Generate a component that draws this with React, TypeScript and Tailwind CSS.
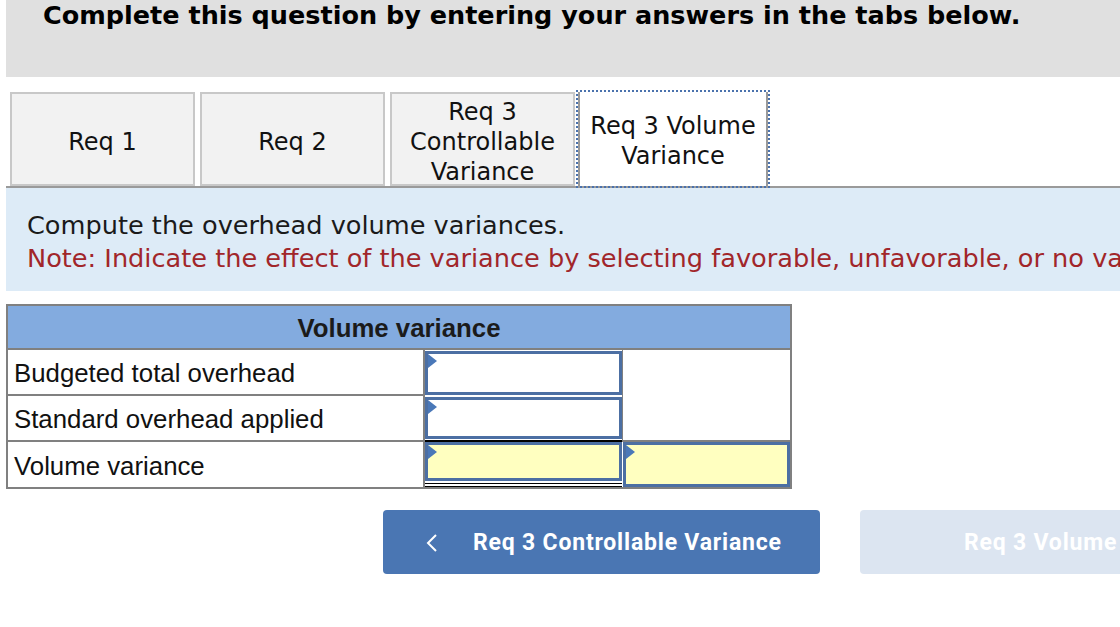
import React from "react";

const verdana = { fontFamily: '"DejaVu Sans", Verdana, sans-serif' };

function Tab({ children }: { children: React.ReactNode }) {
  return (
    <div className="w-[185px] h-[94px] border-2 border-[#c8c8c8] bg-[#f2f2f2] flex items-center justify-center pt-[5px] text-center text-[24px] leading-[30px] text-[#111]">
      {children}
    </div>
  );
}

function Arrow() {
  return (
    <svg className="absolute left-0 top-0" width="10" height="14" viewBox="0 0 10 14">
      <polygon points="0,0 9,7 0,14" fill="#4a78b8" />
    </svg>
  );
}

function InputBox({ yellow }: { yellow?: boolean }) {
  return (
    <div
      className={
        "relative h-full border-[3px] border-[#4c6fa3] " +
        (yellow ? "bg-[#ffffc0]" : "bg-white")
      }
    >
      <Arrow />
    </div>
  );
}

export default function App() {
  return (
    <div className="w-[1120px] h-[627px] bg-white overflow-hidden" style={verdana}>
      <div className="ml-[6px] h-[77px] bg-[#e0e0e0] pl-[37px]">
        <div className="text-[25.5px] font-bold text-black leading-[30px] whitespace-nowrap">
          Complete this question by entering your answers in the tabs below.
        </div>
      </div>

      <div className="mt-[15px] ml-[6px] flex items-end border-b-2 border-[#9a9a9a] h-[96px]">
        <div className="flex gap-[5px] pl-[4px] items-end">
          <Tab>Req 1</Tab>
          <Tab>Req 2</Tab>
          <Tab>
            Req 3
            <br />
            Controllable
            <br />
            Variance
          </Tab>
        </div>
        <div className="ml-px -mb-[2px] h-[98px] w-[194px] border-2 border-dotted border-[#4a72ad]">
          <div className="h-full border-x-2 border-[#9a9a9a] bg-white flex items-center justify-center pt-[3px] text-center text-[24px] leading-[30px] text-[#111]">
            <span>
              Req 3 Volume
              <br />
              Variance
            </span>
          </div>
        </div>
      </div>

      <div className="ml-[6px] h-[103px] bg-[#ddebf7] pl-[21px] pt-[21px] text-[25.6px] leading-[33px] whitespace-nowrap">
        <div className="text-[#1a1a1a]">Compute the overhead volume variances.</div>
        <div className="text-[#a1262a]">
          Note: Indicate the effect of the variance by selecting favorable, unfavorable, or no variance.
        </div>
      </div>

      <div
        className="ml-[6px] mt-[13px] w-[786px] border-2 border-[#808080]"
        style={{ fontFamily: '"Liberation Sans", Arial, sans-serif' }}
      >
        <div className="h-[44px] bg-[#83abdf] border-b-2 border-[#808080] flex items-center justify-center pt-[2px] text-[25.8px] font-bold text-[#1b1b1b]">
          Volume variance
        </div>
        <div className="grid grid-cols-[417px_197px_168px] text-[25.8px] text-[#111]">
          <div className="h-[46px] border-b-2 border-r-2 border-[#808080] pl-[6px] pt-[3px] flex items-center whitespace-nowrap">
            Budgeted total overhead
          </div>
          <div className="h-[46px] pt-px pb-[1px]">
            <InputBox />
          </div>
          <div className="row-span-2 border-l border-b-2 border-[#808080]" />
          <div className="h-[46px] border-b-2 border-r-2 border-[#808080] pl-[6px] pt-[3px] flex items-center whitespace-nowrap">
            Standard overhead applied
          </div>
          <div className="h-[46px] pt-[1px] pb-px border-b-2 border-black">
            <InputBox />
          </div>
          <div className="h-[45px] border-r-2 border-[#808080] pl-[6px] pt-[3px] flex items-center whitespace-nowrap">
            Volume variance
          </div>
          <div className="h-[45px] pb-[2px] border-b-[4px] border-double border-black">
            <InputBox yellow />
          </div>
          <div className="h-[45px] pl-[1px]">
            <InputBox yellow />
          </div>
        </div>
      </div>

      <div className="mt-[21px] flex" style={{ fontFamily: 'Roboto, "Liberation Sans", sans-serif' }}>
        <div className="ml-[383px] w-[437px] h-[64px] shrink-0 rounded-[4px] bg-[#4a76b3] flex items-center pt-[2px] text-white">
          <svg className="ml-[42px] shrink-0" width="14" height="22" viewBox="0 0 14 22">
            <polyline points="11,3 3,11 11,19" fill="none" stroke="white" strokeWidth="2" />
          </svg>
          <span className="ml-[34px] text-[23px] tracking-[0.8px] font-bold whitespace-nowrap">
            Req 3 Controllable Variance
          </span>
        </div>
        <div className="ml-[40px] w-[400px] h-[64px] shrink-0 rounded-[4px] bg-[#dce5f1] flex items-center pt-[2px] text-white">
          <span className="ml-[104px] text-[23px] tracking-[0.8px] font-bold whitespace-nowrap">
            Req 3 Volume Variance
          </span>
        </div>
      </div>
    </div>
  );
}
